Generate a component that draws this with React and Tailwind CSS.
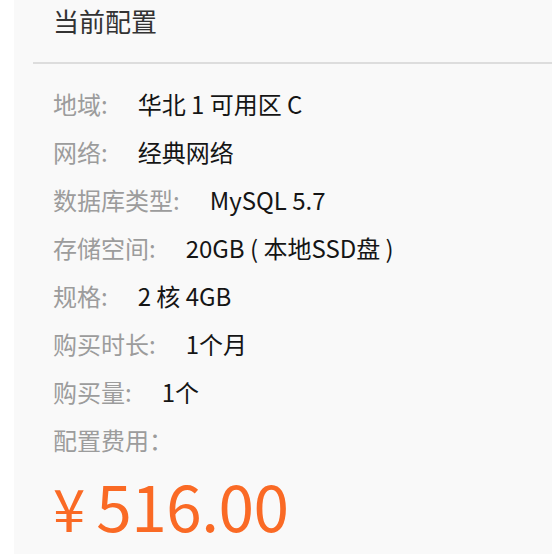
const rows = [
  { label: "地域:", value: "华北 1 可用区 C" },
  { label: "网络:", value: "经典网络" },
  { label: "数据库类型:", value: "MySQL 5.7" },
  { label: "存储空间:", value: "20GB ( 本地SSD盘 )" },
  { label: "规格:", value: "2 核 4GB" },
  { label: "购买时长:", value: "1个月" },
  { label: "购买量:", value: "1个" },
]

export default function App() {
  return (
    <div
      className="flex w-[552px] h-[554px] bg-white overflow-hidden"
      style={{ fontFamily: '"Noto Sans CJK SC", "Noto Sans", sans-serif' }}
    >
      <div className="w-[14px] shrink-0" />
      <div className="flex-1 bg-[#f9f9f9]">
        <div className="ml-[19px] h-[64px] border-b-2 border-[#dddddd] pl-[20px]">
          <h2 className="text-[26px] leading-[42px] text-[#333333]">当前配置</h2>
        </div>
        <div className="pl-[39px] pt-[16px]">
          {rows.map((row) => (
            <div key={row.label} className="flex items-center h-[48px] text-[24px]">
              <span className="text-[#9c9c9c]">{row.label}</span>
              <span className="ml-[30px] text-[#151515]">{row.value}</span>
            </div>
          ))}
          <div className="flex items-center h-[48px] text-[24px] text-[#9c9c9c]">配置费用：</div>
          <div className="flex items-baseline leading-[80px] text-[#fa6a25]">
            <span className="text-[58px] mr-[11px]">¥</span>
            <span className="text-[64px] tracking-[-0.5px]">516.00</span>
          </div>
        </div>
      </div>
    </div>
  )
}
